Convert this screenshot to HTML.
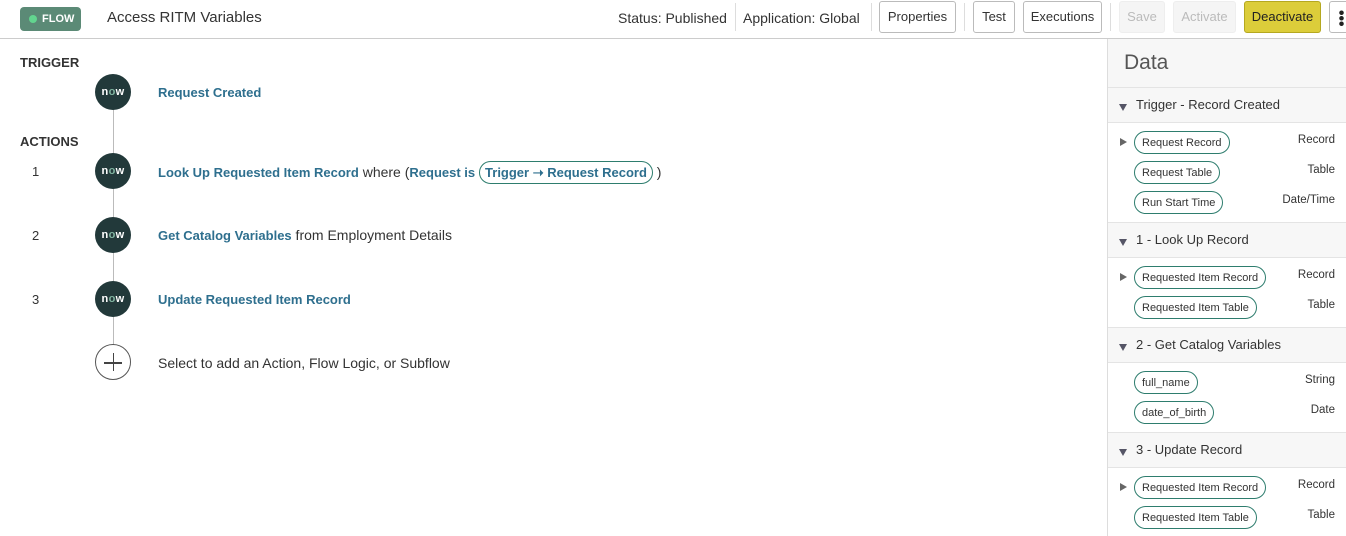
<!DOCTYPE html>
<html><head><meta charset="utf-8"><style>
*{box-sizing:border-box;margin:0;padding:0}
body{width:1346px;height:536px;overflow:hidden;background:#fff;font-family:"Liberation Sans",sans-serif;color:#333;position:relative}
.a{position:absolute;white-space:nowrap}
.hdr{position:absolute;left:0;top:0;width:1346px;height:39px;border-bottom:1px solid #ccc;background:#fff}
.badge{left:20px;top:7px;width:61px;height:24px;background:#5b8a76;border-radius:4px;color:#fff;font-weight:bold;font-size:11px;line-height:24px;padding-left:22px}
.badge:before{content:"";position:absolute;left:9px;top:8px;width:8px;height:8px;border-radius:50%;background:#62d58f}
.btn{position:absolute;top:1px;height:32px;border:1px solid #bbb;border-radius:3px;font-size:13px;line-height:30px;text-align:center;background:#fff;color:#333}
.sep{position:absolute;top:3px;width:1px;height:28px;background:#ddd}
.sec{font-weight:bold;font-size:13px;color:#333}
.circ{position:absolute;left:95px;width:36px;height:36px;border-radius:50%;background:#22393a;color:#fff;font-weight:bold;font-size:11px;line-height:36px;text-align:center;letter-spacing:0.3px}
.circ i{font-style:normal;color:#81b5a1}
.step{left:158px;font-size:14px;color:#333}
.step .lnk,.a.lnk{color:#2e6f8e;font-weight:bold;font-size:13px}
.num{left:32px;font-size:13px}
.panel{position:absolute;left:1107px;top:39px;width:239px;height:497px;border-left:1px solid #ddd;background:#fff}
.ph{position:absolute;left:0;width:239px;background:#f7f7f7;border-bottom:1px solid #e4e4e4;border-top:1px solid #e4e4e4;font-size:13px;color:#333}
.ph span{position:absolute;left:28px;top:9px}
.ph:before{content:"";position:absolute;left:11px;top:16px;border-left:4px solid transparent;border-right:4px solid transparent;border-top:7px solid #556}
.pill{position:absolute;left:26px;height:23px;border:1px solid #2e7d6e;border-radius:12px;font-size:11px;line-height:22px;padding:0 7px;color:#333;background:#fff}
.ty{position:absolute;right:11px;font-size:11.5px;color:#333}
.tri{position:absolute;left:12px;border-top:4px solid transparent;border-bottom:4px solid transparent;border-left:7px solid #666}
</style></head><body>
<div class="hdr">
<div class="a badge">FLOW</div>
<div class="a" style="left:107px;top:9px;font-size:15px;color:#333">Access RITM Variables</div>
<div class="a" style="left:618px;top:10px;font-size:14px">Status: Published</div>
<div class="sep" style="left:735px"></div>
<div class="a" style="left:743px;top:10px;font-size:14px">Application: Global</div>
<div class="sep" style="left:871px"></div>
<div class="btn" style="left:879px;width:77px">Properties</div>
<div class="sep" style="left:964px"></div>
<div class="btn" style="left:973px;width:42px">Test</div>
<div class="btn" style="left:1023px;width:79px">Executions</div>
<div class="sep" style="left:1110px"></div>
<div class="btn" style="left:1119px;width:46px;background:#f5f5f5;border-color:#eee;color:#bbb">Save</div>
<div class="btn" style="left:1173px;width:63px;background:#f5f5f5;border-color:#eee;color:#bbb">Activate</div>
<div class="btn" style="left:1244px;width:77px;background:#dccd3a;border-color:#b5a820;color:#222">Deactivate</div>
<div class="btn" style="left:1329px;width:30px"><span style="position:absolute;left:9px;top:8px;width:5px;height:16px;background:radial-gradient(circle,#222 2px,transparent 2.5px) 0 0/5px 5.5px"></span></div>
</div>

<div class="a sec" style="left:20px;top:55px">TRIGGER</div>
<div class="a sec" style="left:20px;top:134px">ACTIONS</div>
<div class="a" style="left:113px;top:92px;width:1px;height:270px;background:#bbb"></div>

<div class="circ" style="top:74px">n<i>o</i>w</div>
<div class="a step" style="top:84px"><span class="lnk">Request Created</span></div>

<div class="a num" style="top:164px">1</div>
<div class="circ" style="top:153px">n<i>o</i>w</div>
<div class="a step" style="top:164px"><span class="lnk">Look Up Requested Item Record</span> where (<span class="lnk">Request is</span> <span class="lnk" style="display:inline-block;border:1px solid #2e7d6e;border-radius:12px;padding:0 5px;line-height:21px;margin-top:-3px">Trigger ➝ Request Record</span> )</div>

<div class="a num" style="top:228px">2</div>
<div class="circ" style="top:217px">n<i>o</i>w</div>
<div class="a step" style="top:227px"><span class="lnk">Get Catalog Variables</span> from Employment Details</div>

<div class="a num" style="top:292px">3</div>
<div class="circ" style="top:281px">n<i>o</i>w</div>
<div class="a step" style="top:291px"><span class="lnk">Update Requested Item Record</span></div>

<div class="a" style="left:95px;top:344px;width:36px;height:36px;border-radius:50%;border:1px solid #555;background:#fff"><div style="position:absolute;left:8px;top:17px;width:18px;height:1.5px;background:#444"></div><div style="position:absolute;left:16.5px;top:8px;width:1.5px;height:18px;background:#444"></div></div>
<div class="a step" style="top:355px">Select to add an Action, Flow Logic, or Subflow</div>

<div class="panel">
<div style="position:absolute;left:0;top:0;width:239px;height:49px;background:#f7f7f7"></div>
<div class="a" style="left:16px;top:12px;font-size:21px;color:#555">Data</div>

<div class="ph" style="top:48px;height:36px"><span>Trigger - Record Created</span></div>
<div class="tri" style="top:99px"></div>
<div class="pill" style="top:92px">Request Record</div><div class="ty" style="top:95px">Record</div>
<div class="pill" style="top:122px">Request Table</div><div class="ty" style="top:125px">Table</div>
<div class="pill" style="top:152px">Run Start Time</div><div class="ty" style="top:155px">Date/Time</div>

<div class="ph" style="top:183px;height:36px"><span>1 - Look Up Record</span></div>
<div class="tri" style="top:234px"></div>
<div class="pill" style="top:227px">Requested Item Record</div><div class="ty" style="top:230px">Record</div>
<div class="pill" style="top:257px">Requested Item Table</div><div class="ty" style="top:260px">Table</div>

<div class="ph" style="top:288px;height:36px"><span>2 - Get Catalog Variables</span></div>
<div class="pill" style="top:332px">full_name</div><div class="ty" style="top:335px">String</div>
<div class="pill" style="top:362px">date_of_birth</div><div class="ty" style="top:365px">Date</div>

<div class="ph" style="top:393px;height:36px"><span>3 - Update Record</span></div>
<div class="tri" style="top:444px"></div>
<div class="pill" style="top:437px">Requested Item Record</div><div class="ty" style="top:440px">Record</div>
<div class="pill" style="top:467px">Requested Item Table</div><div class="ty" style="top:470px">Table</div>
</div>
</body></html>
